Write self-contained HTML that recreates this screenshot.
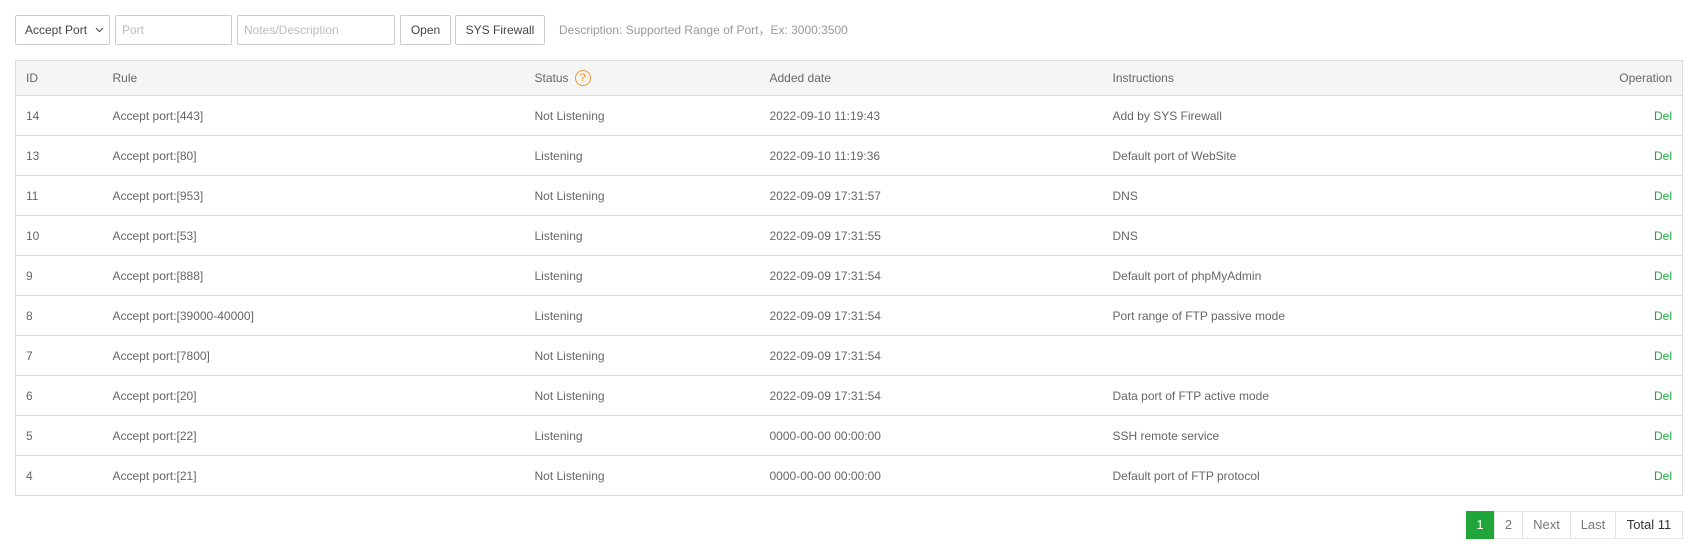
<!DOCTYPE html>
<html><head><meta charset="utf-8"><style>
*{box-sizing:border-box;margin:0;padding:0}
body{width:1698px;height:555px;background:#fff;font-family:"Liberation Sans",sans-serif;font-size:12px;color:#666;position:relative;overflow:hidden}
.b{position:absolute;top:15px;height:30px;border:1px solid #ccc;border-radius:2px;line-height:28px;padding-left:9px;background:#fff}
.ph{color:#bbb}
.btn{color:#444;text-align:center;padding:0}
table{position:absolute;left:15px;top:60px;width:1668px;border-collapse:collapse;border:1px solid #ddd}
th{background:#f5f5f5;font-weight:normal;height:35px;text-align:left;color:#666;border-bottom:1px solid #ddd;white-space:nowrap}
td{height:40px;border-top:1px solid #ddd;color:#666}
th,td{padding:0 0 0 10px}
.r{text-align:right;padding-right:10px}
.g{color:#20a53a}
.s{position:relative}
.q{position:absolute;left:40px;top:-1px;width:16px;height:16px;border:1px solid #f0952f;border-radius:50%;color:#f0952f;text-align:center;line-height:14px;font-size:11px}
.pg{position:absolute;top:511px;height:28px;border:1px solid #e5e5e5;line-height:26px;text-align:center;font-size:13px;color:#777}
</style></head><body>
<div class="b" style="left:15px;width:95px;color:#444">Accept Port <svg style="position:absolute;right:5px;top:11px" width="9" height="6" viewBox="0 0 9 6"><path d="M1 1l3.5 3.5L8 1" fill="none" stroke="#555" stroke-width="1.2"/></svg></div>
<div class="b ph" style="left:115px;width:117px;padding-left:6px">Port</div>
<div class="b ph" style="left:237px;width:158px;padding-left:6px">Notes/Description</div>
<div class="b btn" style="left:400px;width:51px">Open</div>
<div class="b btn" style="left:455px;width:90px">SYS Firewall</div>
<div style="position:absolute;left:559px;top:15px;line-height:30px;color:#999">Description: Supported Range of Port，Ex: 3000:3500</div>
<table>
<colgroup><col style="width:87px"><col style="width:422px"><col style="width:235px"><col style="width:343px"><col><col style="width:150px"></colgroup>
<tr><th>ID</th><th>Rule</th><th><span class="s">Status<span class="q">?</span></span></th><th>Added date</th><th>Instructions</th><th class="r">Operation</th></tr>
<tr><td>14</td><td>Accept port:[443]</td><td>Not Listening</td><td>2022-09-10 11:19:43</td><td>Add by SYS Firewall</td><td class="r g">Del</td></tr>
<tr><td>13</td><td>Accept port:[80]</td><td>Listening</td><td>2022-09-10 11:19:36</td><td>Default port of WebSite</td><td class="r g">Del</td></tr>
<tr><td>11</td><td>Accept port:[953]</td><td>Not Listening</td><td>2022-09-09 17:31:57</td><td>DNS</td><td class="r g">Del</td></tr>
<tr><td>10</td><td>Accept port:[53]</td><td>Listening</td><td>2022-09-09 17:31:55</td><td>DNS</td><td class="r g">Del</td></tr>
<tr><td>9</td><td>Accept port:[888]</td><td>Listening</td><td>2022-09-09 17:31:54</td><td>Default port of phpMyAdmin</td><td class="r g">Del</td></tr>
<tr><td>8</td><td>Accept port:[39000-40000]</td><td>Listening</td><td>2022-09-09 17:31:54</td><td>Port range of FTP passive mode</td><td class="r g">Del</td></tr>
<tr><td>7</td><td>Accept port:[7800]</td><td>Not Listening</td><td>2022-09-09 17:31:54</td><td></td><td class="r g">Del</td></tr>
<tr><td>6</td><td>Accept port:[20]</td><td>Not Listening</td><td>2022-09-09 17:31:54</td><td>Data port of FTP active mode</td><td class="r g">Del</td></tr>
<tr><td>5</td><td>Accept port:[22]</td><td>Listening</td><td>0000-00-00 00:00:00</td><td>SSH remote service</td><td class="r g">Del</td></tr>
<tr><td>4</td><td>Accept port:[21]</td><td>Not Listening</td><td>0000-00-00 00:00:00</td><td>Default port of FTP protocol</td><td class="r g">Del</td></tr>
</table>
<div class="pg" style="left:1466px;width:28px;background:#20a53a;border-color:#20a53a;color:#fff">1</div>
<div class="pg" style="left:1494px;width:29px">2</div>
<div class="pg" style="left:1522px;width:49px">Next</div>
<div class="pg" style="left:1570px;width:46px">Last</div>
<div class="pg" style="left:1615px;width:68px;color:#333">Total 11</div>
</body></html>
